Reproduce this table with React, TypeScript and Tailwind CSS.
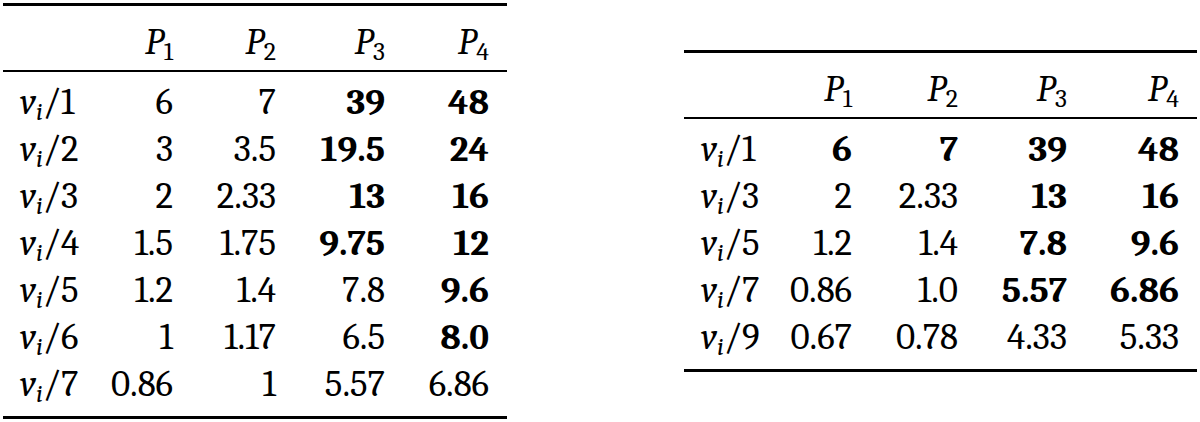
const left = [
  ["1", "6", "7", "*39", "*48"],
  ["2", "3", "3.5", "*19.5", "*24"],
  ["3", "2", "2.33", "*13", "*16"],
  ["4", "1.5", "1.75", "*9.75", "*12"],
  ["5", "1.2", "1.4", "7.8", "*9.6"],
  ["6", "1", "1.17", "6.5", "*8.0"],
  ["7", "0.86", "1", "5.57", "6.86"],
];

const right = [
  ["1", "*6", "*7", "*39", "*48"],
  ["3", "2", "2.33", "*13", "*16"],
  ["5", "1.2", "1.4", "*7.8", "*9.6"],
  ["7", "0.86", "1.0", "*5.57", "*6.86"],
  ["9", "0.67", "0.78", "4.33", "5.33"],
];

// "*" marks a bold entry
function Cell({ v }: { v: string }) {
  const bold = v.startsWith("*");
  return (
    <div className={`text-right pr-[18px] ${bold ? "font-bold" : ""}`}>
      {bold ? v.slice(1) : v}
    </div>
  );
}

function Label({ n }: { n: string }) {
  return (
    <div className="pl-[17px]">
      <span className="italic">v</span>
      <sub className="italic text-[0.7em]">i</sub>
      <span>/{n}</span>
    </div>
  );
}

function P({ n }: { n: string }) {
  return (
    <div className="text-right pr-[18px]">
      <span className="italic">P</span>
      <sub className="text-[0.7em]">{n}</sub>
    </div>
  );
}

function Table({ rows, cols }: { rows: string[][]; cols: string }) {
  return (
    <div className="flex flex-col">
      <div className="h-[3px] bg-black" />
      <div className={`grid ${cols} items-center h-[47px] mt-[13px] mb-[4px]`}>
        <div />
        <P n="1" />
        <P n="2" />
        <P n="3" />
        <P n="4" />
      </div>
      <div className="h-[2px] bg-black" />
      <div className="pt-[7px] pb-[8px]">
        {rows.map((r, i) => (
          <div key={i} className={`grid ${cols} items-center h-[47px]`}>
            <Label n={r[0]} />
            {r.slice(1).map((v, j) => (
              <Cell key={j} v={v} />
            ))}
          </div>
        ))}
      </div>
      <div className="h-[3px] bg-black" />
    </div>
  );
}

export default function App() {
  return (
    <div className="w-[1200px] h-[422px] bg-white text-black flex items-center font-serif text-[37px] leading-none overflow-hidden">
      <div className="ml-[3px]">
        <Table rows={left} cols="grid-cols-[86px_102px_103px_109px_104px]" />
      </div>
      <div className="ml-[177px]">
        <Table rows={right} cols="grid-cols-[86px_100px_106px_109px_112px]" />
      </div>
    </div>
  );
}
